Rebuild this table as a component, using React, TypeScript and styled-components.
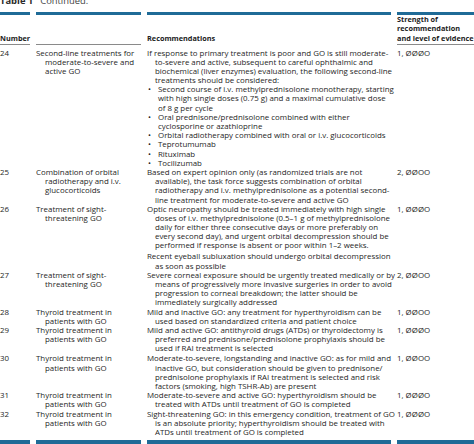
import React from 'react';
import styled, { createGlobalStyle } from 'styled-components';

const GlobalStyle = createGlobalStyle`
  html, body {
    margin: 0;
    padding: 0;
    background: #ffffff;
  }
  body {
    font-family: "Open Sans", "Liberation Sans", sans-serif;
    color: #262626;
    overflow: hidden;
  }
`;

const Page = styled.div`
  width: 474px;
  height: 444px;
  overflow: hidden;
`;

const Caption = styled.div`
  margin-top: -5px;
  height: 17px;
  font-size: 9.4px;
  line-height: 11px;
  color: #444;
  white-space: nowrap;

  b {
    font-weight: 700;
    color: #2a2a2a;
    margin-right: 7px;
  }
`;

const Table = styled.div`
  display: grid;
  grid-template-columns: 30px 105px 244px 77px;
  column-gap: 6px;
  font-size: 7.9px;
`;

const Bar = styled.div<{ $thick?: boolean }>`
  height: ${p => (p.$thick ? '5px' : '2.5px')};
  background: #1f6b97;
  margin-top: ${p => (p.$thick ? '3px' : '0')};
`;

const HeadCell = styled.div<{ $ruled?: boolean }>`
  display: flex;
  flex-direction: column;
  justify-content: flex-end;
  height: 28.5px;
  padding-bottom: 0.5px;
  border-bottom: 1px solid ${p => (p.$ruled ? '#8a8a8a' : 'transparent')};
  font-weight: 700;
  font-size: 7.3px;
  line-height: 9.5px;
  color: #222;
  white-space: nowrap;
`;

const Cell = styled.div<{ $first?: boolean; $gap?: number }>`
  padding-top: ${p => (p.$first ? 4 : p.$gap ?? 0)}px;
  white-space: nowrap;
`;

const Para = styled.div<{ $gap?: boolean }>`
  margin-top: ${p => (p.$gap ? '1.8px' : '0')};
`;

const Line = styled.div<{ $indent: number }>`
  height: 9.2px;
  line-height: 9.2px;
  padding-left: ${p => p.$indent}px;
`;

const BulletItem = styled.div`
  display: flex;

  &::before {
    content: '•';
    width: 11px;
    height: 9.2px;
    line-height: 9.2px;
    flex: none;
    padding-left: 1px;
    box-sizing: border-box;
  }
`;

type Row = {
  n: string;
  topic: string[];
  paras: string[][];
  bullets?: string[][];
  grade: string;
  gap?: number;
};

const thyroid = ['Thyroid treatment in', 'patients with GO'];
const sight = ['Treatment of sight-', 'threatening GO'];

const rows: Row[] = [
  {
    n: '24',
    topic: ['Second-line treatments for', 'moderate-to-severe and', 'active GO'],
    paras: [
      [
        'If response to primary treatment is poor and GO is still moderate-',
        'to-severe and active, subsequent to careful ophthalmic and',
        'biochemical (liver enzymes) evaluation, the following second-line',
        'treatments should be considered:',
      ],
    ],
    bullets: [
      [
        'Second course of i.v. methylprednisolone monotherapy, starting',
        'with high single doses (0.75 g) and a maximal cumulative dose',
        'of 8 g per cycle',
      ],
      ['Oral prednisone/prednisolone combined with either', 'cyclosporine or azathioprine'],
      ['Orbital radiotherapy combined with oral or i.v. glucocorticoids'],
      ['Teprotumumab'],
      ['Rituximab'],
      ['Tocilizumab'],
    ],
    grade: '1, ØØØO',
  },
  {
    n: '25',
    topic: ['Combination of orbital', 'radiotherapy and i.v.', 'glucocorticoids'],
    paras: [
      [
        'Based on expert opinion only (as randomized trials are not',
        'available), the task force suggests combination of orbital',
        'radiotherapy and i.v. methylprednisolone as a potential second-',
        'line treatment for moderate-to-severe and active GO',
      ],
    ],
    grade: '2, ØØOO',
  },
  {
    n: '26',
    topic: sight,
    paras: [
      [
        'Optic neuropathy should be treated immediately with high single',
        'doses of i.v. methylprednisolone (0.5–1 g of methylprednisolone',
        'daily for either three consecutive days or more preferably on',
        'every second day), and urgent orbital decompression should be',
        'performed if response is absent or poor within 1–2 weeks.',
      ],
      ['Recent eyeball subluxation should undergo orbital decompression', 'as soon as possible'],
    ],
    grade: '1, ØØØO',
  },
  {
    n: '27',
    topic: sight,
    paras: [
      [
        'Severe corneal exposure should be urgently treated medically or by',
        'means of progressively more invasive surgeries in order to avoid',
        'progression to corneal breakdown; the latter should be',
        'immediately surgically addressed',
      ],
    ],
    grade: '2, ØØOO',
  },
  {
    n: '28',
    topic: thyroid,
    paras: [
      [
        'Mild and inactive GO: any treatment for hyperthyroidism can be',
        'used based on standardized criteria and patient choice',
      ],
    ],
    grade: '1, ØØOO',
  },
  {
    n: '29',
    topic: thyroid,
    paras: [
      [
        'Mild and active GO: antithyroid drugs (ATDs) or thyroidectomy is',
        'preferred and prednisone/prednisolone prophylaxis should be',
        'used if RAI treatment is selected',
      ],
    ],
    grade: '1, ØØØO',
  },
  {
    n: '30',
    topic: thyroid,
    gap: 1,
    paras: [
      [
        'Moderate-to-severe, longstanding and inactive GO: as for mild and',
        'inactive GO, but consideration should be given to prednisone/',
        'prednisolone prophylaxis if RAI treatment is selected and risk',
        'factors (smoking, high TSHR-Ab) are present',
      ],
    ],
    grade: '1, ØØOO',
  },
  {
    n: '31',
    topic: thyroid,
    paras: [
      [
        'Moderate-to-severe and active GO: hyperthyroidism should be',
        'treated with ATDs until treatment of GO is completed',
      ],
    ],
    grade: '1, ØØØO',
  },
  {
    n: '32',
    topic: thyroid,
    paras: [
      [
        'Sight-threatening GO: in this emergency condition, treatment of GO',
        'is an absolute priority; hyperthyroidism should be treated with',
        'ATDs until treatment of GO is completed',
      ],
    ],
    grade: '1, ØØØO',
  },
];

// first line flush, following lines hang by `indent`
const Lines = ({ lines, indent }: { lines: string[]; indent: number }) => (
  <>
    {lines.map((l, i) => (
      <Line key={i} $indent={i === 0 ? 0 : indent}>
        {l}
      </Line>
    ))}
  </>
);

export default function App() {
  return (
    <Page>
      <GlobalStyle />
      <Caption>
        <b>Table 1</b>Continued.
      </Caption>
      <Table>
        <Bar />
        <Bar />
        <Bar />
        <Bar />

        <HeadCell $ruled>Number</HeadCell>
        <HeadCell $ruled />
        <HeadCell>Recommendations</HeadCell>
        <HeadCell $ruled>
          <span>Strength of</span>
          <span>recommendation</span>
          <span>and level of evidence</span>
        </HeadCell>

        {rows.map((r, ri) => (
          <React.Fragment key={r.n}>
            <Cell $first={ri === 0} $gap={r.gap}>
              <Line $indent={0}>{r.n}</Line>
            </Cell>
            <Cell $first={ri === 0} $gap={r.gap}>
              <Lines lines={r.topic} indent={9} />
            </Cell>
            <Cell $first={ri === 0} $gap={r.gap}>
              {r.paras.map((p, pi) => (
                <Para key={pi} $gap={pi > 0}>
                  <Lines lines={p} indent={8} />
                </Para>
              ))}
              {r.bullets &&
                r.bullets.map((b, bi) => (
                  <BulletItem key={bi}>
                    <div>
                      <Lines lines={b} indent={0} />
                    </div>
                  </BulletItem>
                ))}
            </Cell>
            <Cell $first={ri === 0} $gap={r.gap}>
              <Line $indent={0}>{r.grade}</Line>
            </Cell>
          </React.Fragment>
        ))}

        <Bar $thick />
        <Bar $thick />
        <Bar $thick />
        <Bar $thick />
      </Table>
    </Page>
  );
}
